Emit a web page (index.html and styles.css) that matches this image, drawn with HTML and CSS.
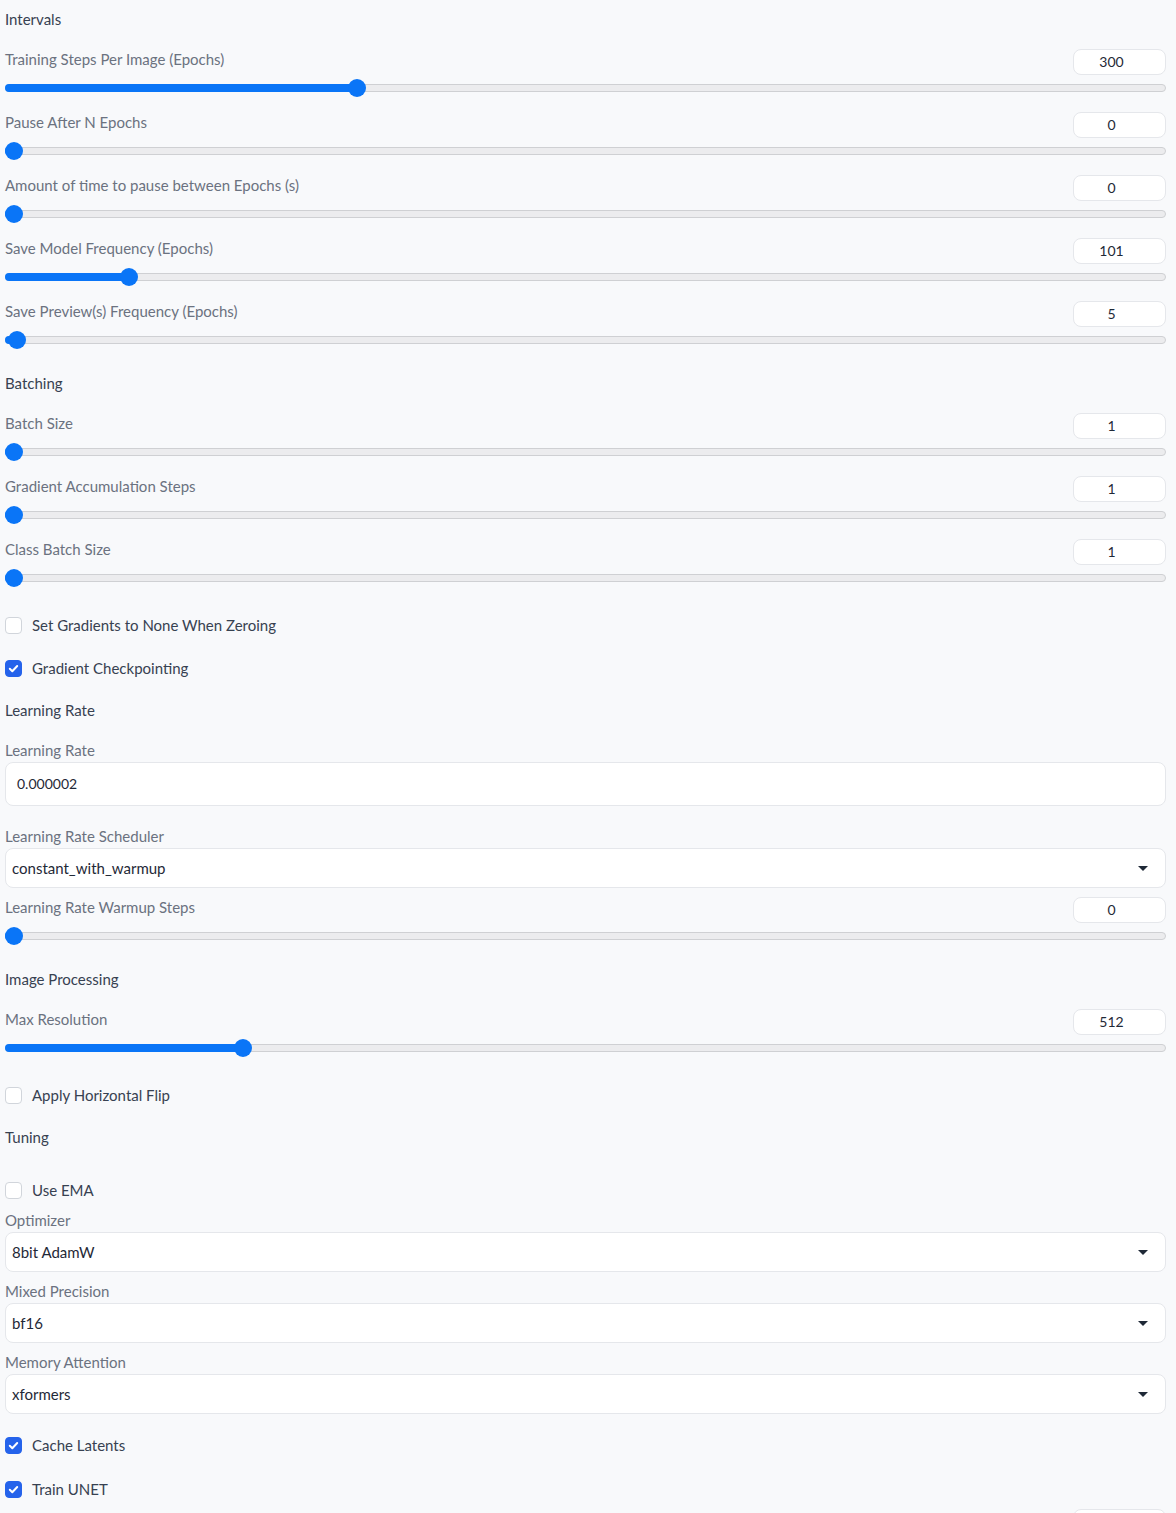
FILE: index.html
```html
<!DOCTYPE html>
<html>
<head>
<meta charset="utf-8">
<link rel="stylesheet" href="styles.css">
</head>
<body>
<div class="page">
  <div class="section-title">Intervals</div>

  <div class="slider-block">
    <div class="slider-head"><span class="label">Training Steps Per Image (Epochs)</span><span class="num">300</span></div>
    <div class="track" style="--v:0.3"><div class="fill"></div><div class="thumb"></div></div>
  </div>
  <div class="slider-block">
    <div class="slider-head"><span class="label">Pause After N Epochs</span><span class="num">0</span></div>
    <div class="track" style="--v:0"><div class="fill"></div><div class="thumb"></div></div>
  </div>
  <div class="slider-block">
    <div class="slider-head"><span class="label">Amount of time to pause between Epochs (s)</span><span class="num">0</span></div>
    <div class="track" style="--v:0"><div class="fill"></div><div class="thumb"></div></div>
  </div>
  <div class="slider-block">
    <div class="slider-head"><span class="label">Save Model Frequency (Epochs)</span><span class="num">101</span></div>
    <div class="track" style="--v:0.101"><div class="fill"></div><div class="thumb"></div></div>
  </div>
  <div class="slider-block">
    <div class="slider-head"><span class="label">Save Preview(s) Frequency (Epochs)</span><span class="num">5</span></div>
    <div class="track" style="--v:0.003"><div class="fill"></div><div class="thumb"></div></div>
  </div>

  <div class="section-title">Batching</div>

  <div class="slider-block">
    <div class="slider-head"><span class="label">Batch Size</span><span class="num">1</span></div>
    <div class="track" style="--v:0"><div class="fill"></div><div class="thumb"></div></div>
  </div>
  <div class="slider-block">
    <div class="slider-head"><span class="label">Gradient Accumulation Steps</span><span class="num">1</span></div>
    <div class="track" style="--v:0"><div class="fill"></div><div class="thumb"></div></div>
  </div>
  <div class="slider-block">
    <div class="slider-head"><span class="label">Class Batch Size</span><span class="num">1</span></div>
    <div class="track" style="--v:0"><div class="fill"></div><div class="thumb"></div></div>
  </div>

  <label class="check-row"><span class="box"></span><span class="check-label">Set Gradients to None When Zeroing</span></label>
  <label class="check-row"><span class="box checked"><svg viewBox="0 0 17 17" width="17" height="17"><path d="M4.8 8.8 L7.3 11.2 L12.2 6" fill="none" stroke="#fff" stroke-width="2" stroke-linecap="round" stroke-linejoin="round"/></svg></span><span class="check-label">Gradient Checkpointing</span></label>

  <div class="section-title">Learning Rate</div>

  <div class="field field-text">
    <div class="label">Learning Rate</div>
    <div class="textbox">0.000002</div>
  </div>
  <div class="field">
    <div class="label">Learning Rate Scheduler</div>
    <div class="dropdown"><span>constant_with_warmup</span><span class="caret"></span></div>
  </div>

  <div class="slider-block">
    <div class="slider-head"><span class="label">Learning Rate Warmup Steps</span><span class="num">0</span></div>
    <div class="track" style="--v:0"><div class="fill"></div><div class="thumb"></div></div>
  </div>

  <div class="section-title">Image Processing</div>

  <div class="slider-block">
    <div class="slider-head"><span class="label">Max Resolution</span><span class="num">512</span></div>
    <div class="track" style="--v:0.2"><div class="fill"></div><div class="thumb"></div></div>
  </div>

  <label class="check-row"><span class="box"></span><span class="check-label">Apply Horizontal Flip</span></label>

  <div class="section-title">Tuning</div>

  <label class="check-row"><span class="box"></span><span class="check-label">Use EMA</span></label>

  <div class="field">
    <div class="label">Optimizer</div>
    <div class="dropdown"><span>8bit AdamW</span><span class="caret"></span></div>
  </div>
  <div class="field">
    <div class="label">Mixed Precision</div>
    <div class="dropdown"><span>bf16</span><span class="caret"></span></div>
  </div>
  <div class="field">
    <div class="label">Memory Attention</div>
    <div class="dropdown"><span>xformers</span><span class="caret"></span></div>
  </div>

  <label class="check-row after-field"><span class="box checked"><svg viewBox="0 0 17 17" width="17" height="17"><path d="M4.8 8.8 L7.3 11.2 L12.2 6" fill="none" stroke="#fff" stroke-width="2" stroke-linecap="round" stroke-linejoin="round"/></svg></span><span class="check-label">Cache Latents</span></label>
  <label class="check-row wide"><span class="box checked"><svg viewBox="0 0 17 17" width="17" height="17"><path d="M4.8 8.8 L7.3 11.2 L12.2 6" fill="none" stroke="#fff" stroke-width="2" stroke-linecap="round" stroke-linejoin="round"/></svg></span><span class="check-label">Train UNET</span></label>

  <div class="slider-block">
    <div class="slider-head"><span class="label">Step Ratio of Text Encoder Training</span><span class="num">1</span></div>
    <div class="track" style="--v:1"><div class="fill"></div><div class="thumb"></div></div>
  </div>
</div>
</body>
</html>
```

FILE: styles.css
```css
html, body {
  margin: 0;
  padding: 0;
  background: #f8f9fb;
}
body {
  font-family: "Lato", "Source Sans Pro", "Noto Sans", sans-serif;
  font-size: 15px;
  color: #374151;
}
.page {
  padding: 0 10px 40px 5px;
  display: flex;
  flex-direction: column;
}
.section-title {
  margin: 9px 0 20px;
  line-height: 20px;
  height: 20px;
  color: #374151;
}
.check-row + .section-title {
  margin-top: 12px;
}
.label {
  color: #6b7280;
  line-height: 20px;
  height: 20px;
  white-space: nowrap;
}
.slider-block {
  display: flex;
  flex-direction: column;
  margin-bottom: 20px;
}
.slider-head {
  display: flex;
  justify-content: space-between;
  align-items: flex-start;
  height: 26px;
}
.num {
  width: 93px;
  height: 26px;
  box-sizing: border-box;
  background: #fff;
  border: 1px solid #e5e7eb;
  border-radius: 8px;
  text-align: center;
  padding-right: 16px;
  line-height: 24px;
  font-size: 14px;
  color: #1f2937;
}
.track {
  position: relative;
  margin-top: 9px;
  height: 8px;
  box-sizing: border-box;
  background: #ececee;
  border: 1px solid #cfd0d3;
  border-radius: 4px;
}
.fill {
  position: absolute;
  left: -1px;
  top: -1px;
  height: 8px;
  width: calc(10px + var(--v) * (100% - 18px));
  background: #0a75f7;
  border-radius: 4px;
}
.thumb {
  position: absolute;
  top: -6px;
  left: calc(-1px + var(--v) * (100% - 16px));
  width: 18px;
  height: 18px;
  border-radius: 50%;
  background: #0a75f7;
}
.check-row {
  display: flex;
  align-items: center;
  gap: 10px;
  height: 20px;
  margin: 13px 0 10px;
}
.check-row.after-field {
  margin-top: 12px;
}
.check-row.wide {
  margin-top: 14px;
}
.box {
  width: 17px;
  height: 17px;
  box-sizing: border-box;
  border: 1px solid #d1d5db;
  border-radius: 4px;
  background: #fff;
  display: flex;
  align-items: center;
  justify-content: center;
  flex: none;
}
.box.checked {
  background: #2563eb;
  border-color: #2563eb;
}
.box svg {
  display: block;
  flex: none;
}
.check-label {
  line-height: 20px;
  color: #374151;
}
.field {
  display: flex;
  flex-direction: column;
  gap: 2px;
  margin-bottom: 9px;
}
.field-text {
  margin-bottom: 20px;
}
.textbox {
  height: 44px;
  box-sizing: border-box;
  background: #fff;
  border: 1px solid #e5e7eb;
  border-radius: 8px;
  padding: 0 11px;
  line-height: 42px;
  font-size: 14px;
  color: #1f2937;
}
.dropdown {
  height: 40px;
  box-sizing: border-box;
  background: #fff;
  border: 1px solid #e5e7eb;
  border-radius: 8px;
  padding: 0 17px 0 6px;
  display: flex;
  align-items: center;
  justify-content: space-between;
  color: #1f2937;
}
.caret {
  width: 0;
  height: 0;
  border-left: 5px solid transparent;
  border-right: 5px solid transparent;
  border-top: 5px solid #1f2937;
}
```
